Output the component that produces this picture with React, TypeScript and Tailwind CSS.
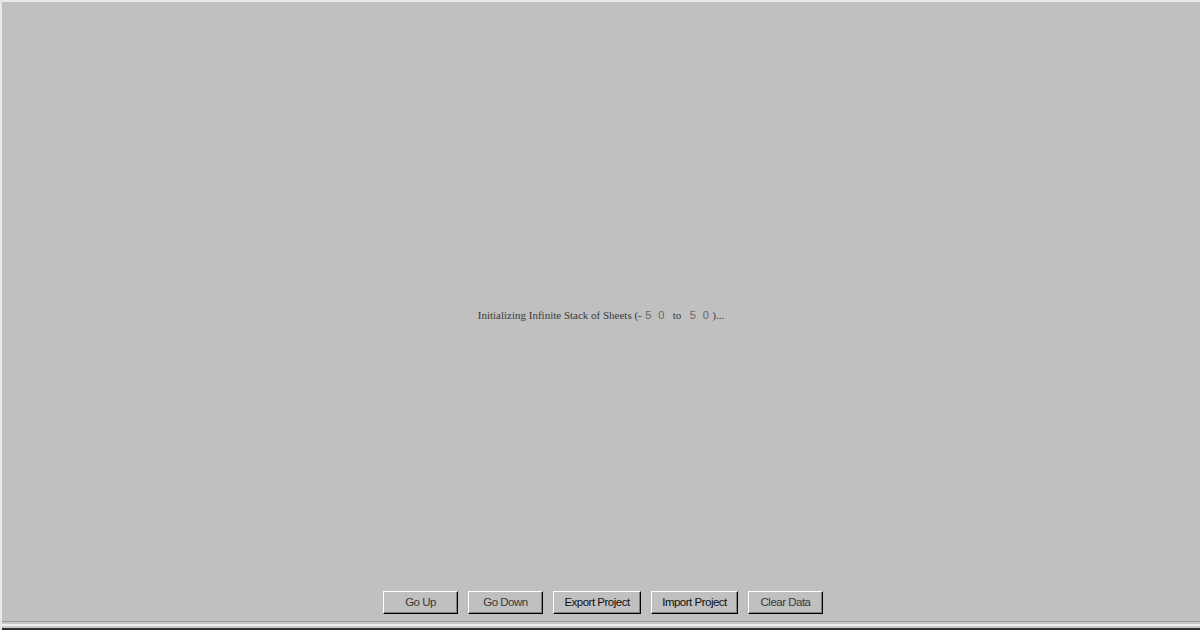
const buttons = [
  { label: "Go Up", w: "w-[75px]", dim: true },
  { label: "Go Down", w: "w-[75px]", dim: true },
  { label: "Export Project", w: "w-[88px]", dim: false },
  { label: "Import Project", w: "w-[87px]", dim: false },
  { label: "Clear Data", w: "w-[75px]", dim: true },
];

function Digit({ d }: { d: string }) {
  return (
    <span className="inline-block w-[13px] text-center font-['Liberation_Sans',sans-serif] text-[11px] text-[#666]">
      {d}
    </span>
  );
}

export default function App() {
  return (
    <div className="flex h-[630px] w-[1200px] flex-col overflow-hidden border-l-2 border-t-2 border-l-[#e8e8e8] border-t-[#e8e8e8] bg-[#c0c0c0]">
      {/* loading message */}
      <div className="flex flex-1 items-center justify-center pt-[38px]">
        <p className="font-['Liberation_Serif',serif] text-[11px] text-[#3a3a3a]">
          Initializing Infinite Stack of Sheets (-
          <Digit d="5" />
          <Digit d="0" />
          <span className="px-[5px]">to</span>
          <Digit d="5" />
          <Digit d="0" />
          )...
        </p>
      </div>

      {/* toolbar */}
      <div className="flex justify-center gap-[10px] pb-[7px] pl-[4px]">
        {buttons.map((b) => (
          <button
            key={b.label}
            className={`${b.w} h-[23px] border border-t-white border-l-white border-r-black border-b-black bg-[#c0c0c0] font-['Liberation_Sans_Narrow','Liberation_Sans',sans-serif] text-[11.5px] tracking-[-0.5px] shadow-[inset_-1px_-1px_0_#808080] ${
              b.dim ? "text-[#383838]" : "text-[#111]"
            }`}
          >
            {b.label}
          </button>
        ))}
      </div>

      {/* bottom scroll strip */}
      <div className="h-[9px] border-t border-t-[#9a9a9a] bg-[#c8c8c8]">
        <div className="mt-[2px] h-[2px] bg-[#f0f0f0]" />
        <div className="mt-[2px] h-[2px] bg-[#303030]" />
      </div>
    </div>
  );
}
